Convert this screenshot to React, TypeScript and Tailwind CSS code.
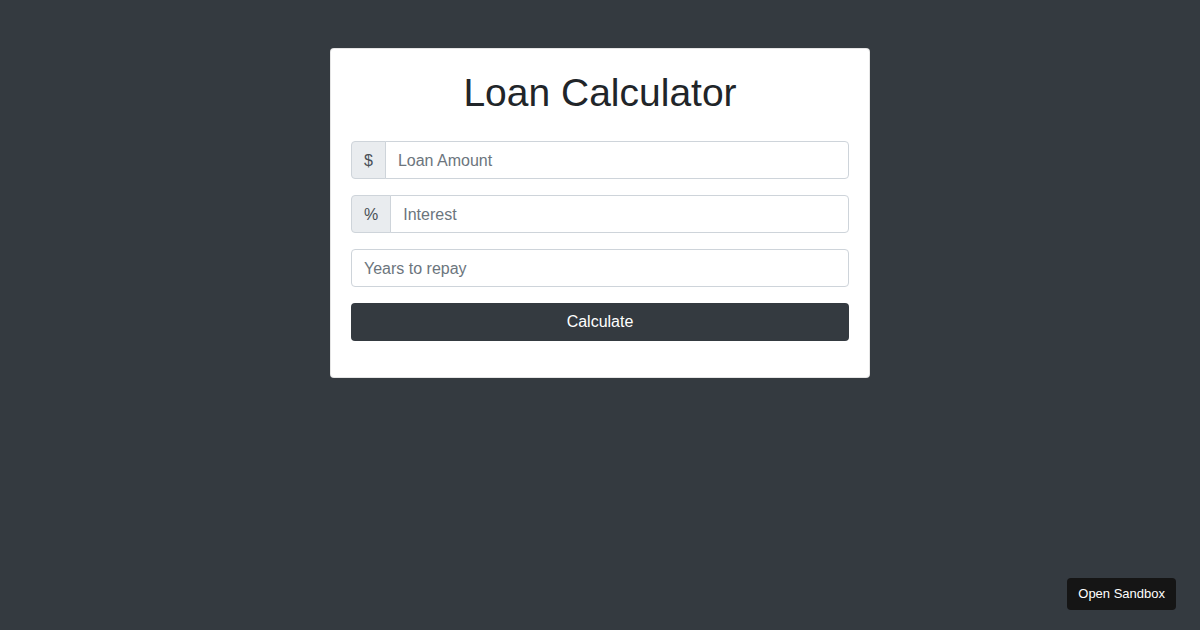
import React from 'react';

const inputCls =
  "flex-1 min-w-0 h-[38px] px-3 pt-[2px] text-base text-[#495057] bg-white border border-[#ced4da] placeholder:text-[#6c757d] outline-none";

const addonCls =
  "h-[38px] flex items-center px-3 pt-[2px] text-base text-[#495057] bg-[#e9ecef] border border-[#ced4da] rounded-l";

const App: React.FC = () => {
  return (
    <div className="min-h-[630px] w-full bg-[#343a40] font-['Liberation_Sans',Arial,sans-serif] flex flex-col items-center pt-12 relative">
      {/* Card */}
      <div className="w-[540px] bg-white border border-black/10 rounded">
        <div className="p-5">
          <h1 className="text-[39px] leading-[48px] text-[#212529] text-center mb-6">Loan Calculator</h1>
          <form className="flex flex-col gap-4" onSubmit={(e) => e.preventDefault()}>
            <div className="flex">
              <span className={addonCls}>$</span>
              <input className={inputCls + " -ml-px rounded-r"} placeholder="Loan Amount" />
            </div>
            <div className="flex">
              <span className={addonCls}>%</span>
              <input className={inputCls + " -ml-px rounded-r"} placeholder="Interest" />
            </div>
            <div className="flex">
              <input className={inputCls + " rounded"} placeholder="Years to repay" />
            </div>
            <button className="h-[38px] w-full bg-[#343a40] text-white text-base rounded mb-4">Calculate</button>
          </form>
        </div>
      </div>

      {/* Sandbox badge */}
      <div className="absolute right-6 bottom-5 h-8 px-[11px] flex items-center bg-[#151515] text-white text-[13px] rounded">
        Open Sandbox
      </div>
    </div>
  );
};

export default App;
